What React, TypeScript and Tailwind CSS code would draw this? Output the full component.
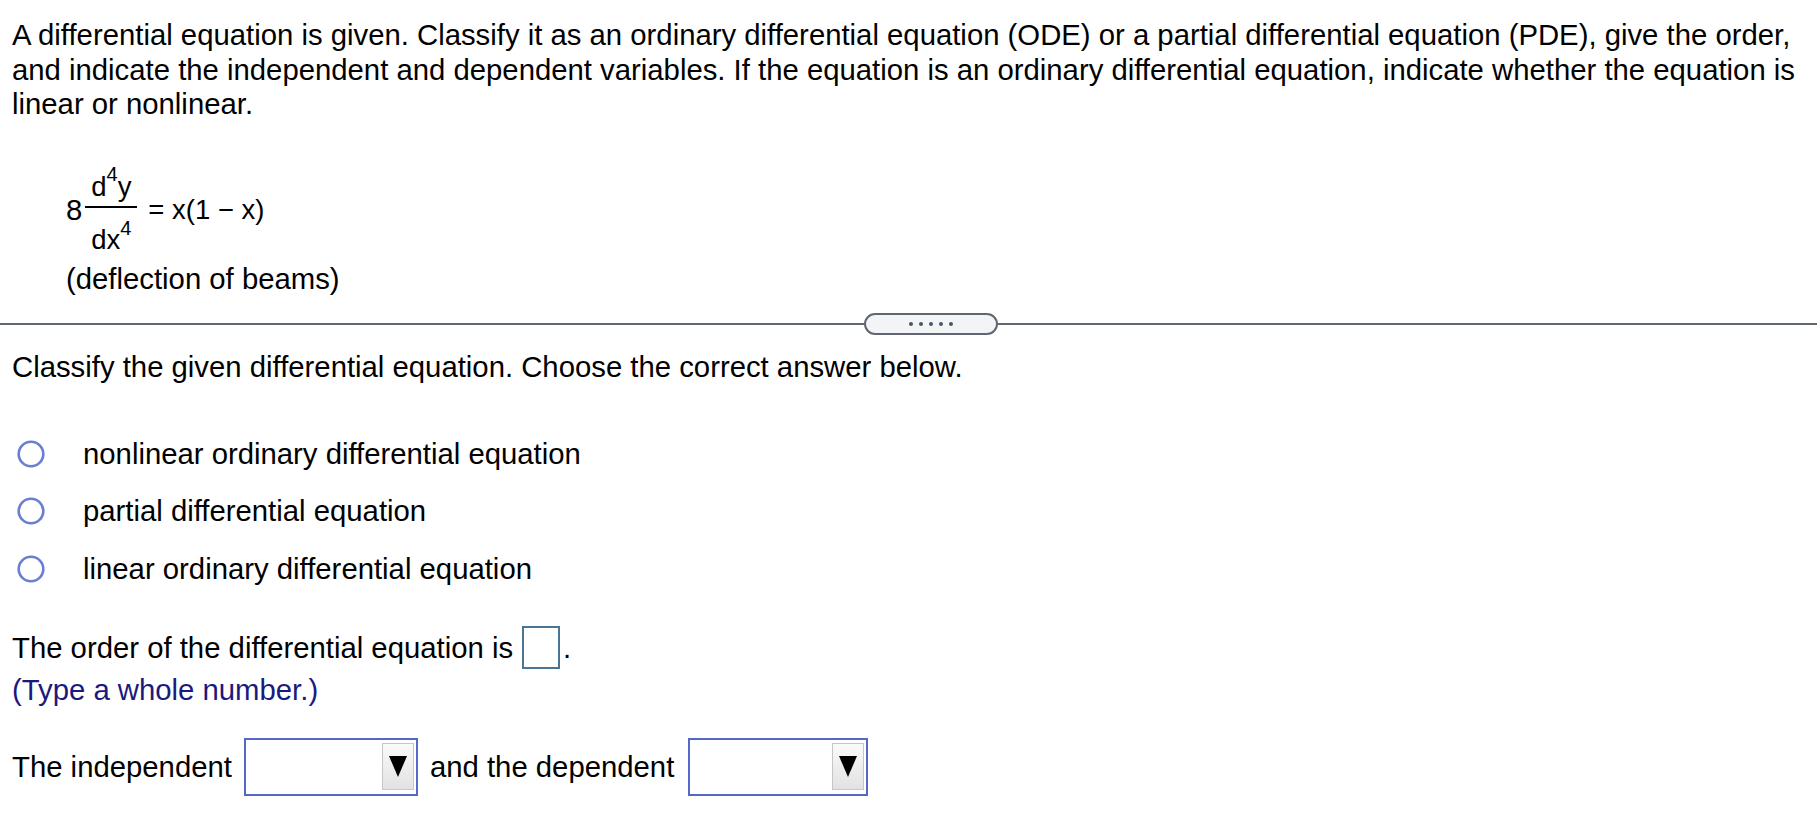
import React from "react";

function Radio({ label }: { label: string }) {
  return (
    <div className="flex h-[57.5px] items-center">
      <svg width="30" height="30" viewBox="0 0 30 30" className="ml-[4px] shrink-0">
        <circle cx="15" cy="15" r="12.3" fill="white" stroke="#6a7ed4" strokeWidth="2.6" />
      </svg>
      <span className="ml-[37px] whitespace-nowrap">{label}</span>
    </div>
  );
}

function Dropdown({ width }: { width: string }) {
  return (
    <div
      className={`${width} flex h-[58px] shrink-0 items-center justify-end border-2 border-[#5468c8] bg-white pr-[2px]`}
    >
      <div className="mb-[1px] flex h-[47px] w-[32px] items-center justify-center border border-[#c6c6c6] bg-gradient-to-b from-[#fafafa] to-[#e2e2e2]">
        <svg width="18" height="21" viewBox="0 0 18 21">
          <polygon points="0,0 18,0 9,21" fill="#000" />
        </svg>
      </div>
    </div>
  );
}

export default function App() {
  return (
    <div className="h-[830px] w-full overflow-hidden bg-white font-['Liberation_Sans',Arial,sans-serif] text-[29.3px] text-black">
      {/* prompt */}
      <div className="px-[12px] pt-[18px] leading-[34.5px] whitespace-nowrap">
        <div>
          A differential equation is given. Classify it as an ordinary differential equation (ODE) or a partial
          differential equation (PDE), give the order,
        </div>
        <div>
          and indicate the independent and dependent variables. If the equation is an ordinary differential equation,
          indicate whether the equation is
        </div>
        <div>linear or nonlinear.</div>
      </div>

      {/* equation */}
      <div className="ml-[66px] mt-[53.5px] flex items-start text-[27.5px] leading-[24px]">
        <span className="mt-[23px] text-[29.3px]">8</span>
        <div className="ml-[3px] flex w-[52px] flex-col items-center">
          <div className="whitespace-nowrap">
            d<span className="relative top-[-15px] text-[20px] leading-none">4</span>y
          </div>
          <div className="mt-[7px] h-[2px] w-full bg-black" />
          <div className="mt-[20px] whitespace-nowrap">
            dx<span className="relative top-[-14px] text-[20px] leading-none">4</span>
          </div>
        </div>
        <span className="ml-[11px] mt-[23px] whitespace-pre">= x(1 − x)</span>
      </div>
      <div className="ml-[66px] mt-[14.5px] leading-[24px]">(deflection of beams)</div>

      {/* divider */}
      <div className="mt-[22.5px] flex h-[22px] items-center">
        <div className="h-[2px] w-[864px] bg-[#5f6773]" />
        <div className="flex h-[22px] w-[134px] shrink-0 items-center justify-center gap-[6px] rounded-full border-2 border-[#5f6773] bg-[#f3f4f6]">
          <span className="h-[4px] w-[4px] rounded-full bg-[#4b5563]" />
          <span className="h-[4px] w-[4px] rounded-full bg-[#4b5563]" />
          <span className="h-[4px] w-[4px] rounded-full bg-[#4b5563]" />
          <span className="h-[4px] w-[4px] rounded-full bg-[#4b5563]" />
          <span className="h-[4px] w-[4px] rounded-full bg-[#4b5563]" />
        </div>
        <div className="h-[2px] flex-1 bg-[#5f6773]" />
      </div>

      {/* question */}
      <div className="px-[12px] leading-[34.5px]">
        <div className="mt-[14.5px]">Classify the given differential equation. Choose the correct answer below.</div>

        <div className="mt-[41px]">
          <Radio label="nonlinear ordinary differential equation" />
          <Radio label="partial differential equation" />
          <Radio label="linear ordinary differential equation" />
        </div>

        <div className="mt-[33px] flex h-[34.5px] items-center whitespace-nowrap">
          <span>The order of the differential equation is</span>
          <span className="ml-[9px] h-[43px] w-[38px] shrink-0 border-2 border-[#4a7594] bg-white" />
          <span className="ml-[3px]">.</span>
        </div>
        <div className="mt-[8px] text-[#1a1a7e]">(Type a whole number.)</div>

        <div className="mt-[30.5px] flex h-[58px] items-center whitespace-nowrap">
          <span>The independent</span>
          <div className="ml-[12px]">
            <Dropdown width="w-[174px]" />
          </div>
          <span className="ml-[12px]">and the dependent</span>
          <div className="ml-[14px]">
            <Dropdown width="w-[180px]" />
          </div>
        </div>
      </div>
    </div>
  );
}
